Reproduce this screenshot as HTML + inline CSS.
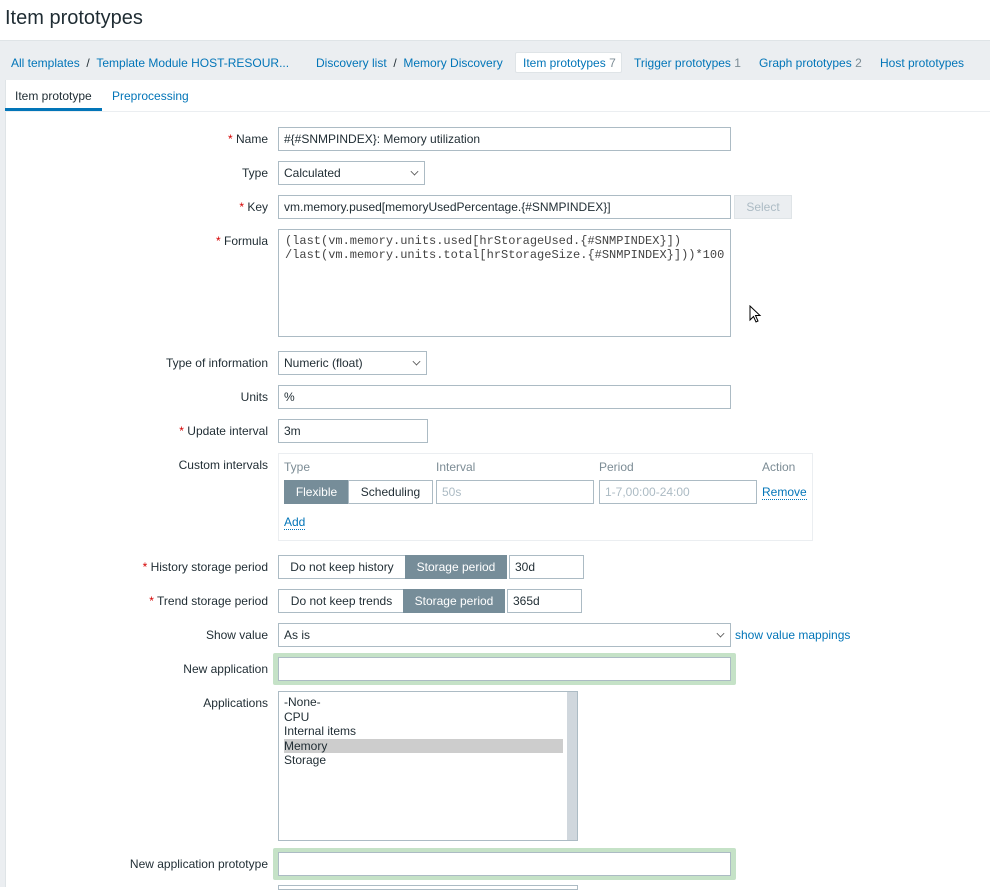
<!DOCTYPE html>
<html><head><style>
*{box-sizing:border-box;margin:0;padding:0}
body{width:990px;height:887px;overflow:hidden;background:#fff;font-family:"Liberation Sans",Arial,sans-serif;font-size:12px;color:#1f2c33;position:relative}
.a{position:absolute}
.lbl{position:absolute;right:722px;white-space:nowrap;line-height:14px;margin-top:1px}
.req{color:#d40000}
.in{position:absolute;border:1px solid #acbbc4;background:#fff;height:24px;padding:0 5px;line-height:22px;white-space:nowrap;overflow:hidden}
.lnk{color:#0275b8}
.cnt{color:#7c8c95}
.chev{position:absolute;right:6px;top:6px;width:7px;height:7px;border-right:1.3px solid #555;border-bottom:1.3px solid #555;transform:rotate(45deg) scale(.8)}
.green{position:absolute;background:#c5e2c7;border-radius:2px}
.btn{position:absolute;height:24px;line-height:22px;text-align:center;border:1px solid #acbbc4;background:#fff}
.dk{background:#768d99;color:#fff;border-color:#768d99}
</style></head><body>
<div class="a" style="left:5px;top:7px;font-size:20px;color:#1f2c33">Item prototypes</div>
<div class="a" style="left:0;top:40px;width:990px;height:847px;background:#ebeef1;border-top:1px solid #dfe4e7"></div>
<div class="a" style="left:11px;top:56px;line-height:14px;white-space:nowrap"><span class="lnk">All templates</span>&nbsp; / &nbsp;<span class="lnk">Template Module HOST-RESOUR...</span></div>
<div class="a" style="left:316px;top:56px;line-height:14px;white-space:nowrap"><span class="lnk">Discovery list</span>&nbsp; / &nbsp;<span class="lnk">Memory Discovery</span></div>
<div class="a" style="left:515px;top:52px;width:107px;height:21px;background:#fff;border:1px solid #dfe4e7;border-radius:2px"></div>
<div class="a" style="left:523px;top:56px;line-height:14px"><span class="lnk">Item prototypes</span> <span class="cnt">7</span></div>
<div class="a" style="left:634px;top:56px;line-height:14px"><span class="lnk">Trigger prototypes</span> <span class="cnt">1</span></div>
<div class="a" style="left:759px;top:56px;line-height:14px"><span class="lnk">Graph prototypes</span> <span class="cnt">2</span></div>
<div class="a" style="left:880px;top:56px;line-height:14px"><span class="lnk">Host prototypes</span></div>
<div class="a" style="left:5px;top:80px;width:985px;height:807px;background:#fff;border-left:1px solid #dfe4e7"></div>
<div class="a" style="left:5px;top:111px;width:985px;height:1px;background:#ebeef1"></div>
<div class="a" style="left:15px;top:89px">Item prototype</div>
<div class="a" style="left:5px;top:108px;width:97px;height:3px;background:#0275b8"></div>
<div class="a lnk" style="left:112px;top:89px">Preprocessing</div>

<div class="lbl" style="top:131px"><span class="req">*</span> Name</div>
<div class="in" style="left:278px;top:127px;width:453px">#{#SNMPINDEX}: Memory utilization</div>
<div class="lbl" style="top:165px">Type</div>
<div class="in" style="left:278px;top:161px;width:147px">Calculated<span class="chev"></span></div>
<div class="lbl" style="top:199px"><span class="req">*</span> Key</div>
<div class="in" style="left:278px;top:195px;width:453px">vm.memory.pused[memoryUsedPercentage.{#SNMPINDEX}]</div>
<div class="btn" style="left:734px;top:195px;width:58px;background:#ebeef1;border-color:#dfe4e7;color:#acbbc4">Select</div>
<div class="lbl" style="top:233px"><span class="req">*</span> Formula</div>
<div class="in" style="left:278px;top:229px;width:453px;height:108px;line-height:14px;padding-top:4px;padding-left:6px;font-family:'Liberation Mono',monospace;font-size:12px;color:#444">(last(vm.memory.units.used[hrStorageUsed.{#SNMPINDEX}])<br>/last(vm.memory.units.total[hrStorageSize.{#SNMPINDEX}]))*100</div>
<svg class="a" style="left:749px;top:305px" width="14" height="20"><path d="M1 1 L1 15 L4.5 11.5 L7 17 L9 16 L6.5 10.5 L11 10.5 Z" fill="#fff" stroke="#000" stroke-width="1"/></svg>
<div class="lbl" style="top:355px">Type of information</div>
<div class="in" style="left:278px;top:351px;width:149px">Numeric (float)<span class="chev"></span></div>
<div class="lbl" style="top:389px">Units</div>
<div class="in" style="left:278px;top:385px;width:453px">%</div>
<div class="lbl" style="top:423px"><span class="req">*</span> Update interval</div>
<div class="in" style="left:278px;top:419px;width:150px">3m</div>
<div class="lbl" style="top:457px">Custom intervals</div>
<div class="a" style="left:278px;top:453px;width:535px;height:88px;border:1px solid #ebeef1"></div>
<div class="a cnt" style="left:284px;top:460px">Type</div>
<div class="a cnt" style="left:436px;top:460px">Interval</div>
<div class="a cnt" style="left:599px;top:460px">Period</div>
<div class="a cnt" style="left:762px;top:460px">Action</div>
<div class="btn dk" style="left:284px;top:480px;width:65px">Flexible</div>
<div class="btn" style="left:348px;top:480px;width:85px">Scheduling</div>
<div class="in" style="left:436px;top:480px;width:158px;color:#acbbc4">50s</div>
<div class="in" style="left:599px;top:480px;width:158px;color:#acbbc4">1-7,00:00-24:00</div>
<div class="a lnk" style="left:762px;top:485px;border-bottom:1px dotted #0275b8">Remove</div>
<div class="a lnk" style="left:284px;top:515px;border-bottom:1px dotted #0275b8">Add</div>

<div class="lbl" style="top:559px"><span class="req">*</span> History storage period</div>
<div class="btn" style="left:278px;top:555px;width:128px">Do not keep history</div>
<div class="btn dk" style="left:405px;top:555px;width:102px">Storage period</div>
<div class="in" style="left:509px;top:555px;width:75px">30d</div>
<div class="lbl" style="top:593px"><span class="req">*</span> Trend storage period</div>
<div class="btn" style="left:278px;top:589px;width:127px">Do not keep trends</div>
<div class="btn dk" style="left:403px;top:589px;width:102px">Storage period</div>
<div class="in" style="left:507px;top:589px;width:75px">365d</div>
<div class="lbl" style="top:627px">Show value</div>
<div class="in" style="left:278px;top:623px;width:453px">As is<span class="chev"></span></div>
<div class="a lnk" style="left:735px;top:628px">show value mappings</div>
<div class="lbl" style="top:661px">New application</div>
<div class="green" style="left:273px;top:653px;width:463px;height:32px"></div>
<div class="in" style="left:278px;top:657px;width:453px"></div>
<div class="lbl" style="top:695px">Applications</div>
<div class="a" style="left:278px;top:691px;width:300px;height:150px;border:1px solid #acbbc4;background:#fff"></div>
<div class="a" style="left:567px;top:692px;width:10px;height:148px;background:#d0d7dd"></div>
<div class="a" style="left:284px;top:739px;width:279px;height:14px;background:#cdcdcd"></div>
<div class="a" style="left:284px;top:695px;line-height:14.5px">-None-<br>CPU<br>Internal items<br>Memory<br>Storage</div>
<div class="lbl" style="top:856px">New application prototype</div>
<div class="green" style="left:273px;top:848px;width:463px;height:32px"></div>
<div class="in" style="left:278px;top:852px;width:453px"></div>
<div class="a" style="left:278px;top:885px;width:300px;height:5px;border:1px solid #acbbc4"></div>
</body></html>
